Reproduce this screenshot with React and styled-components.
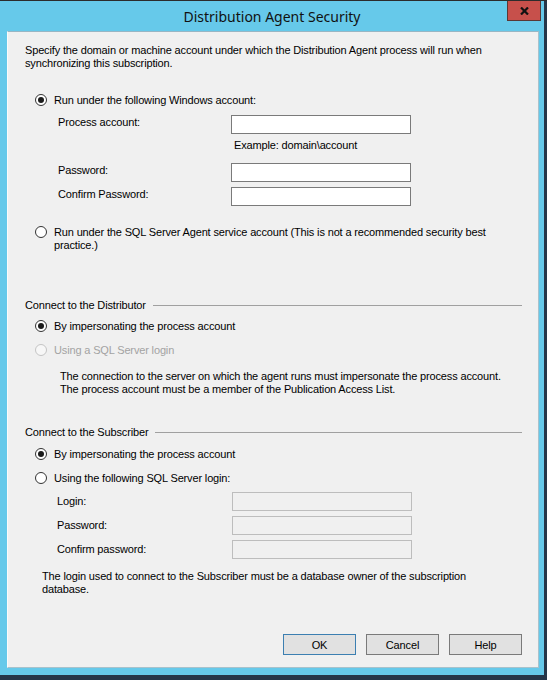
import React from "react";
import styled, { createGlobalStyle } from "styled-components";

const GlobalStyle = createGlobalStyle`
  html, body { margin: 0; padding: 0; background: #253649; }
  body { font-family: "Liberation Sans", Arial, sans-serif; }
  * { box-sizing: border-box; }
`;

const Screen = styled.div`
  width: 547px;
  height: 680px;
  background: #253649;
  border-top: 1px solid #2c2c2c;
  overflow: hidden;
`;

const Window = styled.div`
  width: 544px;
  height: 674px;
  background: #66c9ea;
  display: flex;
  flex-direction: column;
`;

const TitleBar = styled.div`
  height: 30px;
  display: grid;
  grid-template-columns: 1fr auto 1fr;
  align-items: center;
`;

const Title = styled.div`
  font-family: "Noto Sans", "Liberation Sans", sans-serif;
  font-size: 14px;
  color: #111;
  line-height: 20px;
  padding-top: 1px;
`;

const CloseButton = styled.button`
  justify-self: end;
  align-self: start;
  margin-right: 3px;
  width: 34px;
  height: 20px;
  padding: 0;
  background: #c7504b;
  border: 1px solid #5a3835;
  border-top: none;
  display: flex;
  align-items: center;
  justify-content: center;
`;

const Panel = styled.div`
  margin-left: 7px;
  width: 532px;
  height: 637px;
  background: #f0f0f0;
  border-top: 1px solid #98b6c4;
  border-left: 1px solid #fbfbfb;
  border-right: 1px solid #a8c2cc;
  border-bottom: 1px solid #a8c2cc;
  padding: 12px 16px 12px 17px;
  display: flex;
  flex-direction: column;
  font-size: 11px;
  line-height: 13px;
  letter-spacing: -0.15px;
  color: #000;
`;

const Text = styled.div`
  white-space: nowrap;
  margin-top: ${(p) => p.$top || 0}px;
  margin-left: ${(p) => p.$indent || 0}px;
  color: ${(p) => (p.$disabled ? "#a3a3a3" : "#000")};
`;

const RadioRow = styled.div`
  display: flex;
  align-items: flex-start;
  gap: 7px;
  padding: 1.5px 0;
  margin-left: 10px;
  margin-top: ${(p) => p.$top || 0}px;
  color: ${(p) => (p.$disabled ? "#a3a3a3" : "#000")};
`;

const RadioCircle = styled.span`
  flex: none;
  width: 12px;
  height: 12px;
  margin-top: 0.5px;
  border-radius: 50%;
  border: 1px solid ${(p) => (p.$disabled ? "#c4c4c4" : "#333")};
  background: ${(p) => (p.$disabled ? "#f7f7f7" : "#fff")};
  display: flex;
  align-items: center;
  justify-content: center;
  &::after {
    content: "";
    width: 6px;
    height: 6px;
    border-radius: 50%;
    background: ${(p) => (p.$checked ? "#1b1b1b" : "transparent")};
  }
`;

const RadioText = styled.div`
  white-space: nowrap;
`;

const FieldRow = styled.div`
  display: grid;
  grid-template-columns: ${(p) => p.$labelWidth}px 180px;
  align-items: start;
  margin-left: ${(p) => p.$indent}px;
  margin-top: ${(p) => p.$top || 0}px;
`;

const FieldLabel = styled.span`
  margin-top: ${(p) => p.$offset}px;
  white-space: nowrap;
`;

const Input = styled.div`
  height: 19px;
  background: ${(p) => (p.$disabled ? "#f0f0f0" : "#fff")};
  border: 1px solid ${(p) => (p.$disabled ? "#bdbdbd" : "#7a7a7a")};
`;

const Hint = styled.span`
  padding-left: 3px;
  white-space: nowrap;
`;

const GroupHeader = styled.div`
  display: flex;
  align-items: center;
  gap: 7px;
  margin-top: ${(p) => p.$top}px;
  white-space: nowrap;
`;

const Rule = styled.span`
  flex: 1;
  height: 1px;
  background: #a0a0a0;
`;

const ButtonBar = styled.div`
  margin-top: auto;
  display: flex;
  justify-content: flex-end;
  gap: 10px;
`;

const DialogButton = styled.button`
  width: 73px;
  height: 21px;
  padding: 0;
  background: #e1e1e1;
  border: 1px solid ${(p) => (p.$primary ? "#3c7fb1" : "#7a7a7a")};
  font-family: "Liberation Sans", Arial, sans-serif;
  font-size: 11px;
  letter-spacing: -0.15px;
  color: #000;
`;

function Radio({ checked, disabled, top, children }) {
  return (
    <RadioRow $top={top} $disabled={disabled}>
      <RadioCircle $checked={checked} $disabled={disabled} />
      <RadioText>{children}</RadioText>
    </RadioRow>
  );
}

export default function App() {
  return (
    <>
      <GlobalStyle />
      <Screen>
        <Window>
          <TitleBar>
            <span />
            <Title>Distribution Agent Security</Title>
            <CloseButton aria-label="Close">
              <svg width="9" height="8" viewBox="0 0 9 8">
                <path d="M1 0.5 L8 7.5 M8 0.5 L1 7.5" stroke="#111" strokeWidth="2.2" />
              </svg>
            </CloseButton>
          </TitleBar>
          <Panel>
            <Text>
              Specify the domain or machine account under which the Distribution Agent process will run when
              <br />
              synchronizing this subscription.
            </Text>

            <Radio checked top={22}>Run under the following Windows account:</Radio>

            <FieldRow $indent={33} $labelWidth={173} $top={7}>
              <FieldLabel $offset={1}>Process account:</FieldLabel>
              <Input />
            </FieldRow>
            <FieldRow $indent={33} $labelWidth={173} $top={5}>
              <span />
              <Hint>Example: domain\account</Hint>
            </FieldRow>
            <FieldRow $indent={33} $labelWidth={173} $top={11}>
              <FieldLabel $offset={1}>Password:</FieldLabel>
              <Input />
            </FieldRow>
            <FieldRow $indent={33} $labelWidth={173} $top={5}>
              <FieldLabel $offset={1}>Confirm Password:</FieldLabel>
              <Input />
            </FieldRow>

            <Radio top={18}>
              Run under the SQL Server Agent service account (This is not a recommended security best
              <br />
              practice.)
            </Radio>

            <GroupHeader $top={46}>
              Connect to the Distributor
              <Rule />
            </GroupHeader>
            <Radio checked top={6}>By impersonating the process account</Radio>
            <Radio disabled top={8}>Using a SQL Server login</Radio>
            <Text $indent={35} $top={12}>
              The connection to the server on which the agent runs must impersonate the process account.
              <br />
              The process account must be a member of the Publication Access List.
            </Text>

            <GroupHeader $top={30}>
              Connect to the Subscriber
              <Rule />
            </GroupHeader>
            <Radio checked top={7}>By impersonating the process account</Radio>
            <Radio top={8}>Using the following SQL Server login:</Radio>
            <FieldRow $indent={32} $labelWidth={175} $top={6}>
              <FieldLabel $offset={3}>Login:</FieldLabel>
              <Input $disabled />
            </FieldRow>
            <FieldRow $indent={32} $labelWidth={175} $top={5}>
              <FieldLabel $offset={3}>Password:</FieldLabel>
              <Input $disabled />
            </FieldRow>
            <FieldRow $indent={32} $labelWidth={175} $top={5}>
              <FieldLabel $offset={3}>Confirm password:</FieldLabel>
              <Input $disabled />
            </FieldRow>
            <Text $indent={17} $top={11}>
              The login used to connect to the Subscriber must be a database owner of the subscription
              <br />
              database.
            </Text>

            <ButtonBar>
              <DialogButton $primary>OK</DialogButton>
              <DialogButton>Cancel</DialogButton>
              <DialogButton>Help</DialogButton>
            </ButtonBar>
          </Panel>
        </Window>
      </Screen>
    </>
  );
}
